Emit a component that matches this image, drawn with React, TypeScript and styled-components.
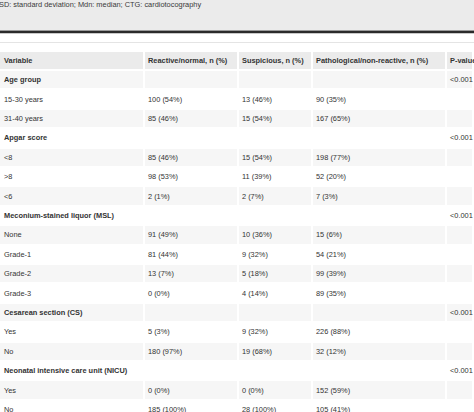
import styled, { createGlobalStyle } from "styled-components";

const GlobalStyle = createGlobalStyle`
  body {
    margin: 0;
    background: #fff;
    font-family: "Liberation Sans", Arial, Helvetica, sans-serif;
    color: #333;
    overflow: hidden;
  }
`;

type Row = {
  label: string;
  group?: boolean;
  reactive?: string;
  suspicious?: string;
  pathological?: string;
  p?: string;
};

const rows: Row[] = [
  { label: "Age group", group: true, p: "<0.001" },
  { label: "15-30 years", reactive: "100 (54%)", suspicious: "13 (46%)", pathological: "90 (35%)" },
  { label: "31-40 years", reactive: "85 (46%)", suspicious: "15 (54%)", pathological: "167 (65%)" },
  { label: "Apgar score", group: true, p: "<0.001" },
  { label: "<8", reactive: "85 (46%)", suspicious: "15 (54%)", pathological: "198 (77%)" },
  { label: ">8", reactive: "98 (53%)", suspicious: "11 (39%)", pathological: "52 (20%)" },
  { label: "<6", reactive: "2 (1%)", suspicious: "2 (7%)", pathological: "7 (3%)" },
  { label: "Meconium-stained liquor (MSL)", group: true, p: "<0.001" },
  { label: "None", reactive: "91 (49%)", suspicious: "10 (36%)", pathological: "15 (6%)" },
  { label: "Grade-1", reactive: "81 (44%)", suspicious: "9 (32%)", pathological: "54 (21%)" },
  { label: "Grade-2", reactive: "13 (7%)", suspicious: "5 (18%)", pathological: "99 (39%)" },
  { label: "Grade-3", reactive: "0 (0%)", suspicious: "4 (14%)", pathological: "89 (35%)" },
  { label: "Cesarean section (CS)", group: true, p: "<0.001" },
  { label: "Yes", reactive: "5 (3%)", suspicious: "9 (32%)", pathological: "226 (88%)" },
  { label: "No", reactive: "180 (97%)", suspicious: "19 (68%)", pathological: "32 (12%)" },
  { label: "Neonatal intensive care unit (NICU)", group: true, p: "<0.001" },
  { label: "Yes", reactive: "0 (0%)", suspicious: "0 (0%)", pathological: "152 (59%)" },
  { label: "No", reactive: "185 (100%)", suspicious: "28 (100%)", pathological: "105 (41%)" },
];

const Caption = styled.div`
  height: 30px;
  background: #ebebeb;
  font-size: 7.4px;
  line-height: 10px;
  color: #3a3a3a;
  margin-left: -1px;
  white-space: nowrap;
`;

const Rule = styled.div`
  height: 2px;
  background: #2a2a2a;
  border-top: 1px solid #9a9a9a;
  border-bottom: 1px solid #c8c8c8;
`;

const Separator = styled.div`
  margin-top: 8px;
  height: 1px;
  background: #e4e4e4;
`;

const Table = styled.table`
  margin-top: 6.7px;
  margin-left: -2px;
  width: 476px;
  table-layout: fixed;
  border-collapse: separate;
  border-spacing: 2px;
  font-size: 7.4px;
  color: #333;
`;

const Th = styled.th`
  background: #ebebeb;
  height: 17.4px;
  padding: 0 0 0 3px;
  text-align: left;
  font-weight: bold;
  white-space: nowrap;
  overflow: visible;
  &:first-child {
    padding-left: 4px;
  }
`;

const Tr = styled.tr<{ $shade: boolean }>`
  td {
    background: ${(p) => (p.$shade ? "#f6f6f6" : "#fff")};
  }
`;

const Td = styled.td<{ $bold?: boolean }>`
  height: 17.4px;
  padding: 0 0 0 3px;
  white-space: nowrap;
  overflow: visible;
  font-weight: ${(p) => (p.$bold ? "bold" : "normal")};
  &:first-child {
    padding-left: 4px;
  }
`;

export default function App() {
  return (
    <>
      <GlobalStyle />
      <Caption>SD: standard deviation; Mdn: median; CTG: cardiotocography</Caption>
      <Rule />
      <Separator />
      <Table>
        <colgroup>
          <col style={{ width: 143 }} />
          <col style={{ width: 92 }} />
          <col style={{ width: 72 }} />
          <col style={{ width: 132 }} />
          <col style={{ width: 25 }} />
        </colgroup>
        <thead>
          <tr>
            <Th>Variable</Th>
            <Th>Reactive/normal, n (%)</Th>
            <Th>Suspicious, n (%)</Th>
            <Th>Pathological/non-reactive, n (%)</Th>
            <Th>P-value</Th>
          </tr>
        </thead>
        <tbody>
          {rows.map((r, i) => (
            <Tr key={i} $shade={i % 2 === 0}>
              <Td $bold={r.group}>{r.label}</Td>
              <Td>{r.reactive}</Td>
              <Td>{r.suspicious}</Td>
              <Td>{r.pathological}</Td>
              <Td>{r.p}</Td>
            </Tr>
          ))}
        </tbody>
      </Table>
    </>
  );
}
